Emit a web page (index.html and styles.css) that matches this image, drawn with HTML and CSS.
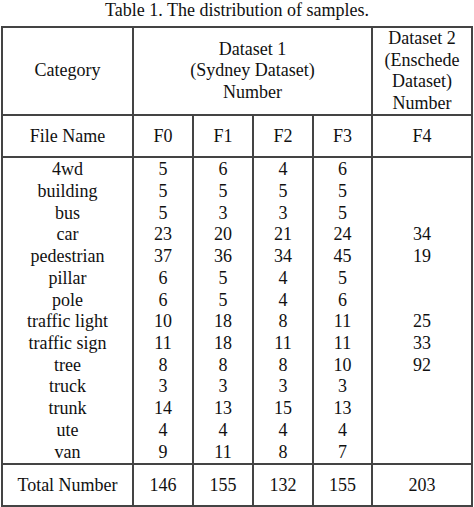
FILE: index.html
```html
<!DOCTYPE html>
<html>
<head>
<meta charset="utf-8">
<link rel="stylesheet" href="styles.css">
</head>
<body>
<div class="caption">Table 1. The distribution of samples.</div>
<table class="dist">
  <colgroup>
    <col class="c-cat"><col class="c-f"><col class="c-f"><col class="c-f"><col class="c-f3"><col class="c-f4">
  </colgroup>
  <thead>
    <tr class="r-head">
      <th>Category</th>
      <th colspan="4">Dataset 1<br>(Sydney Dataset)<br>Number</th>
      <th>Dataset 2<br>(Enschede<br>Dataset)<br>Number</th>
    </tr>
    <tr class="r-file">
      <th>File Name</th><th>F0</th><th>F1</th><th>F2</th><th>F3</th><th>F4</th>
    </tr>
  </thead>
  <tbody class="data">
    <tr class="first"><td>4wd</td><td>5</td><td>6</td><td>4</td><td>6</td><td></td></tr>
    <tr><td>building</td><td>5</td><td>5</td><td>5</td><td>5</td><td></td></tr>
    <tr><td>bus</td><td>5</td><td>3</td><td>3</td><td>5</td><td></td></tr>
    <tr><td>car</td><td>23</td><td>20</td><td>21</td><td>24</td><td>34</td></tr>
    <tr><td>pedestrian</td><td>37</td><td>36</td><td>34</td><td>45</td><td>19</td></tr>
    <tr><td>pillar</td><td>6</td><td>5</td><td>4</td><td>5</td><td></td></tr>
    <tr><td>pole</td><td>6</td><td>5</td><td>4</td><td>6</td><td></td></tr>
    <tr><td>traffic light</td><td>10</td><td>18</td><td>8</td><td>11</td><td>25</td></tr>
    <tr><td>traffic sign</td><td>11</td><td>18</td><td>11</td><td>11</td><td>33</td></tr>
    <tr><td>tree</td><td>8</td><td>8</td><td>8</td><td>10</td><td>92</td></tr>
    <tr><td>truck</td><td>3</td><td>3</td><td>3</td><td>3</td><td></td></tr>
    <tr><td>trunk</td><td>14</td><td>13</td><td>15</td><td>13</td><td></td></tr>
    <tr><td>ute</td><td>4</td><td>4</td><td>4</td><td>4</td><td></td></tr>
    <tr class="last"><td>van</td><td>9</td><td>11</td><td>8</td><td>7</td><td></td></tr>
  </tbody>
  <tfoot>
    <tr class="r-total"><td>Total Number</td><td>146</td><td>155</td><td>132</td><td>155</td><td>203</td></tr>
  </tfoot>
</table>
</body>
</html>
```
FILE: styles.css
```css
html, body {
  margin: 0;
  padding: 0;
  background: #ffffff;
}
body {
  font-family: "Liberation Serif", "Times New Roman", serif;
  font-size: 18px;
  color: #111111;
}
.caption {
  text-align: center;
  line-height: 20px;
  height: 26px;
}
.dist {
  margin-left: 1px;
  width: 471px;
  border-collapse: collapse;
  table-layout: fixed;
}
.c-cat { width: 131px; }
.c-f { width: 60px; }
.c-f3 { width: 59px; }
.c-f4 { width: 100px; }
.dist th, .dist td {
  border: 2px solid #444444;
  padding: 0;
  text-align: center;
  vertical-align: middle;
  font-weight: normal;
}
.r-head th {
  height: 86px;
  line-height: 21.6px;
}
.r-file th {
  height: 40px;
  line-height: 21px;
}
.data td {
  border-top: none;
  border-bottom: none;
  height: 21.7px;
  line-height: 21.7px;
}
.data tr.first td {
  border-top: 2px solid #444444;
  padding-top: 1px;
}
.data tr.last td {
  padding-bottom: 0;
}
.r-total td {
  height: 40px;
  line-height: 21px;
  border-top: 2px solid #444444;
}
```
